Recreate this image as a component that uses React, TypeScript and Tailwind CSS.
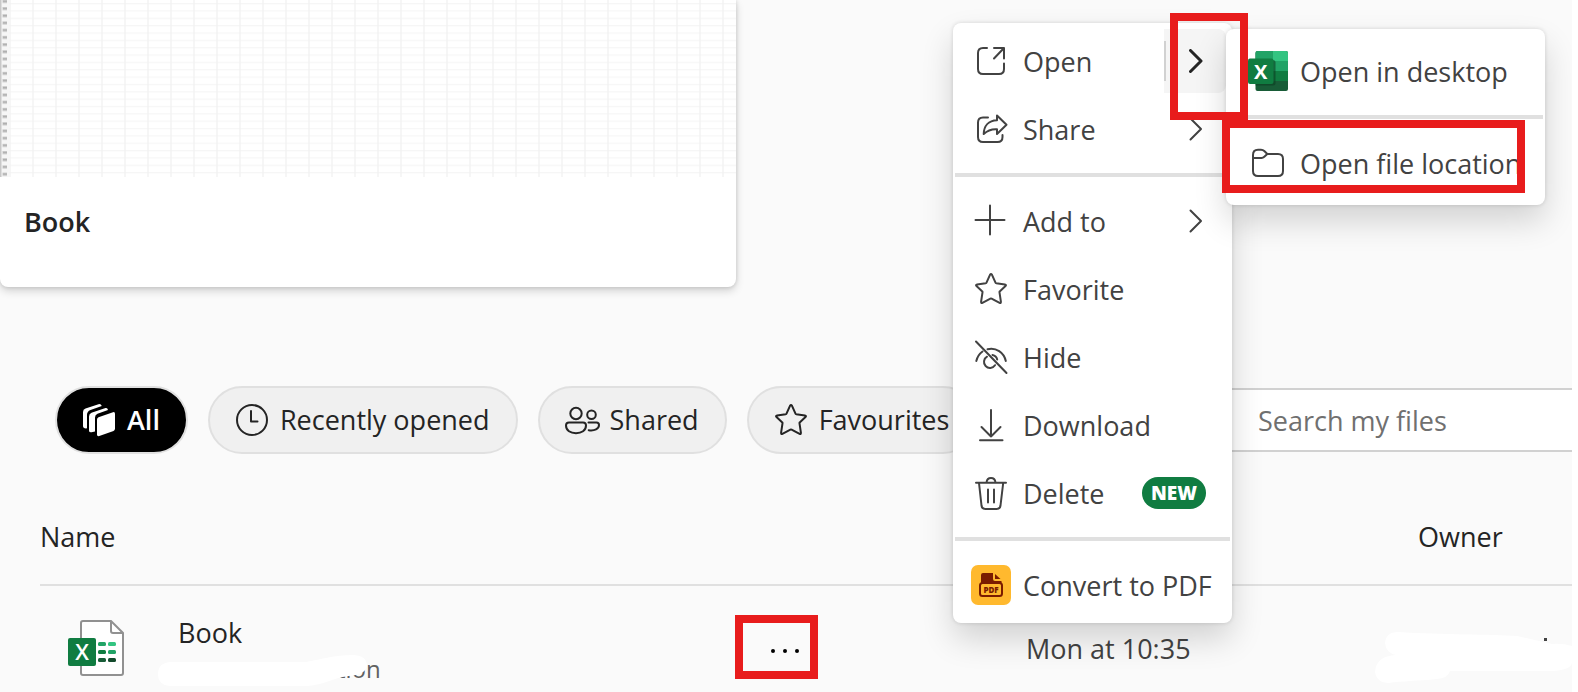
import React from "react";

const stroke = {
    fill: "none",
    stroke: "currentColor",
    strokeWidth: 2,
    strokeLinecap: "round" as const,
    strokeLinejoin: "round" as const,
};

function Icon({ children }: { children: React.ReactNode }) {
    return (
        <svg viewBox="0 0 32 32" className="h-8 w-8 shrink-0 overflow-visible" {...stroke} aria-hidden="true">
            {children}
        </svg>
    );
}

const StarIcon = () => (
    <Icon>
        <path d="M15.1 1.6Q16 .4 16.9 1.6L20.5 9.7Q20.7 10.2 21.3 10.3L29.9 11.5Q31.7 11.8 30.5 13L24.7 18.4Q24.4 18.8 24.5 19.4L25.9 28.6Q26 30.6 24.6 29.8L16.6 25.6Q16 25.3 15.4 25.6L7.4 29.8Q6 30.6 6.1 28.6L7.5 19.4Q7.6 18.8 7.3 18.4L1.5 13Q.3 11.8 2.1 11.5L10.7 10.3Q11.3 10.2 11.5 9.7Z" />
    </Icon>
);

const ClockIcon = () => (
    <Icon>
        <circle cx="16" cy="16" r="15" />
        <path d="M15 7V17.5H21.5" />
    </Icon>
);

const PeopleIcon = () => (
    <Icon>
        <circle cx="10" cy="9.5" r="5.7" />
        <circle cx="25.5" cy="10.8" r="4.3" />
        <path d="M3 18.5H17Q20 18.5 20 21.5C20 26.5 15.5 29.2 10 29.2S0 26.5 0 21.5Q0 18.5 3 18.5Z" />
        <path d="M22.5 18.5H30.500Q33 18.500 33 21C33 25 28.500 27 22.700 26.200" />
    </Icon>
);

const LayersIcon = () => (
    <Icon>
        <g fill="currentColor" stroke="none">
            <path d="M14 15.5Q14 14 15.5 13.3L30 8.2Q32 7.7 32 9.7V24.5Q32 26.3 30.5 27L16.3 32Q14 32.6 14 30.5Z" />
            <path d="M6 12.5Q6 9.7 8.5 8.8L22.5 4Q24.5 3.5 25 5.9L14.5 9.7Q12 10.9 12 13.5V27.5L8.5 28.3Q6 28.6 6 26.5Z" />
            <path d="M0 8Q0 5.4 2.5 4.5L15.5.2Q17.8-.4 18.8 2L7.5 6Q4 7.5 4 10.8V24.3Q0 24.8 0 22Z" />
        </g>
    </Icon>
);

const OpenIcon = () => (
    <Icon>
        <path d="M12 3H8Q3 3 3 8V24Q3 29 8 29H24Q29 29 29 24V18.5" />
        <path d="M19 3H29V13.5M29 3L19 13.5" />
    </Icon>
);

const ShareIcon = () => (
    <Icon>
        <path d="M13 4.5H8Q3 4.5 3 9.5V24Q3 29 8 29H22.5Q27.5 29 27.5 24V22" />
        <path d="M22 2.5L31.5 11.8L22 21V16.2C16 15.8 12.3 17.5 8.7 21C9 13 13.5 7.5 22 7.3Z" />
    </Icon>
);

const PlusIcon = () => (
    <Icon>
        <path d="M15 .5V29.5M.5 15H29.5" />
    </Icon>
);

const HideIcon = () => (
    <Icon>
        <path d="M1 .5L31.5 32" />
        <path d="M1.3 20Q2.7 14 7.5 10.5M12.5 8.2C21 6 29 11.5 30.8 20" />
        <path d="M12 15.7A6 6 0 1 0 20 24.2M17.5 14Q21.3 14.7 22.2 18.5" />
    </Icon>
);

const DownloadIcon = () => (
    <Icon>
        <path d="M16 1V27.5M6.5 18L16 27.5L25.5 18M5 31.3H27.5" />
    </Icon>
);

const DeleteIcon = () => (
    <Icon>
        <path d="M1 5.7H31M11.5 5.5Q12 1 16 1T20.5 5.5M4 6L6.5 28.5Q7 32 10.5 32H21.5Q25 32 25.5 28.5L28.2 6M13 12.5V25.5M19 12.5V25.5" />
    </Icon>
);

const FolderIcon = () => (
    <Icon>
        <path d="M1 8Q1 2.7 6 2.7H9Q11 2.7 12.3 4L15.3 7H26Q31 7 31 12V24Q31 29 26 29H6Q1 29 1 24ZM1 11H9.5Q11 11 12.3 9.8L15.3 7" />
    </Icon>
);

const Chevron = ({ bold = false }: { bold?: boolean }) => (
    <svg viewBox="0 0 14 24" className={bold ? "h-6 w-3.5 text-[#242424]" : "h-6 w-3.5"} {...stroke} strokeWidth={bold ? 3 : 2} aria-hidden="true">
        <path d="M1.5 1.5L12 12L1.5 22.5" />
    </svg>
);

function ExcelIcon() {
    return (
        <svg viewBox="0 0 40 40" className="h-10 w-10 shrink-0" aria-hidden="true">
            <rect x="7.5" width="32.5" height="40" rx="2" fill="#185c37" />
            <path d="M9.5 0H25V10H7.5V2Q7.5 0 9.5 0Z" fill="#21a366" />
            <path d="M25 0H38Q40 0 40 2V10H25Z" fill="#33c481" />
            <path d="M7.5 10H25V20H7.5Z" fill="#107c41" />
            <path d="M25 10H40V20H25Z" fill="#21a366" />
            <path d="M25 20H40V30H25Z" fill="#107c41" />
            <path d="M7.5 9H25Q27.5 9 27.5 11.5V32Q27.5 34.5 25 34.5H7.5Z" fill="#0b3d22" opacity=".6" />
            <rect y="7.5" width="25.5" height="25.5" rx="2" fill="#107c41" />
            <text x="12.7" y="27.5" textAnchor="middle" fontSize="20" fontWeight="700" fill="#fff">X</text>
        </svg>
    );
}

function ExcelFileIcon() {
    return (
        <svg viewBox="0 0 56 56" className="h-14 w-14" aria-hidden="true">
            <path d="M15 1H43L55 13V53Q55 55 53 55H15Q13 55 13 53V3Q13 1 15 1Z" fill="#fff" stroke="#919191" strokeWidth="2" />
            <path d="M43 1V11Q43 13 45 13H55" fill="none" stroke="#919191" strokeWidth="2" />
            <rect y="18" width="28" height="28" rx="2" fill="#107c41" />
            <text x="14" y="40" textAnchor="middle" fontSize="22" fontWeight="600" fill="#fff">X</text>
            <rect x="30" y="22" width="8" height="4" rx="1.5" fill="#21a366" />
            <rect x="40" y="22" width="8" height="4" rx="1.5" fill="#33c481" />
            <rect x="30" y="30" width="8" height="4" rx="1.5" fill="#107c41" />
            <rect x="40" y="30" width="8" height="4" rx="1.5" fill="#21a366" />
            <rect x="30" y="38" width="8" height="4" rx="1.5" fill="#185c37" />
            <rect x="40" y="38" width="8" height="4" rx="1.5" fill="#134a2c" />
        </svg>
    );
}

function PdfIcon() {
    return (
        <svg viewBox="0 0 40 40" className="h-10 w-10 shrink-0" aria-hidden="true">
            <rect width="40" height="40" rx="7" fill="#ffb92e" />
            <path d="M12 8H22V14Q22 16 24 16H30.5V18H10V10Q10 8 12 8Z" fill="#7a1c00" />
            <path d="M24 9L29.5 14H24Z" fill="#7a1c00" />
            <rect x="9" y="18" width="22" height="13" rx="2.5" fill="#ffb92e" stroke="#7a1c00" strokeWidth="2" />
            <text x="20" y="27.5" textAnchor="middle" fontSize="8" fontWeight="800" fill="#7a1c00">PDF</text>
        </svg>
    );
}

// miniature of the sheet: row numbers on the left, empty cells on the right
function SheetPreview() {
    return (
        <svg className="block h-[177px] w-full" aria-hidden="true">
            <defs>
                <pattern id="cells" x="9" y="3" width="23" height="7.35" patternUnits="userSpaceOnUse">
                    <path d="M0 .5H23" stroke="#f6f6f6" strokeWidth="1.5" />
                    <path d="M1 0V8" stroke="#f3f3f3" strokeWidth="1.5" />
                </pattern>
                <pattern id="rows" x="0" y="-2" width="9" height="7.2" patternUnits="userSpaceOnUse">
                    <path d="M2.5 1.8H7V5H2.5Z" fill="#c9c9c9" />
                    <path d="M3 3.4H7" stroke="#a8a8a8" />
                </pattern>
            </defs>
            <rect width="100%" height="100%" fill="#fff" />
            <rect x="9" width="100%" height="100%" fill="url(#cells)" />
            <rect width="9" height="100%" fill="#f6f6f6" />
            <rect width="9" height="100%" fill="url(#rows)" />
            <rect width="1.5" height="100%" fill="#c8c8c8" />
        </svg>
    );
}

const filters = [
    { label: "Recently opened", icon: <ClockIcon /> },
    { label: "Shared", icon: <PeopleIcon /> },
    { label: "Favourites", icon: <StarIcon /> },
];

const Separator = () => <div className="-mx-1 my-2 h-1 bg-[#e0e0e0]" />;

function MenuItem({ icon, label, children }: { icon: React.ReactNode; label: string; children?: React.ReactNode }) {
    return (
        <button role="menuitem" className="flex h-16 w-full items-center gap-3 pl-3 text-left whitespace-nowrap">
            <span className="flex w-10 shrink-0 justify-center">{icon}</span>
            <span className="flex-1 pt-0.5">{label}</span>
            {children}
        </button>
    );
}

function FileMenu() {
    return (
        <div role="menu" className="absolute top-[23px] right-[340px] flex w-[279px] flex-col gap-1 rounded-lg bg-white p-1.5 text-[#424242] shadow-[0_0_4px_rgba(0,0,0,0.14),0_16px_32px_rgba(0,0,0,0.16)]">
            <div className="flex">
                <MenuItem icon={<OpenIcon />} label="Open" />
                <button aria-label="More open options" className="flex h-16 w-[62px] shrink-0 items-center rounded-r-lg bg-[#f5f5f5]">
                    <span className="h-10 w-0.5 bg-[#d1d1d1]" />
                    <span className="pl-[23px]"><Chevron bold /></span>
                </button>
            </div>
            <MenuItem icon={<ShareIcon />} label="Share">
                <span className="pr-[23px]"><Chevron /></span>
            </MenuItem>
            <Separator />
            <MenuItem icon={<PlusIcon />} label="Add to">
                <span className="pr-[23px]"><Chevron /></span>
            </MenuItem>
            <MenuItem icon={<StarIcon />} label="Favorite" />
            <MenuItem icon={<HideIcon />} label="Hide" />
            <MenuItem icon={<DownloadIcon />} label="Download" />
            <MenuItem icon={<DeleteIcon />} label="Delete">
                <span className="mr-5 flex h-8 w-16 items-center justify-center rounded-full bg-[#107c41] text-[19px] font-extrabold text-white">NEW</span>
            </MenuItem>
            <Separator />
            <MenuItem icon={<PdfIcon />} label="Convert to PDF" />
        </div>
    );
}

function OpenSubmenu() {
    return (
        <div role="menu" className="absolute top-[29px] right-[27px] flex w-[319px] flex-col gap-1 rounded-lg bg-white px-1.5 py-2.5 text-[#424242] shadow-[0_0_4px_rgba(0,0,0,0.14),0_16px_32px_rgba(0,0,0,0.16)]">
            <div className="pl-1"><MenuItem icon={<ExcelIcon />} label="Open in desktop" /></div>
            <Separator />
            <div className="pl-1"><MenuItem icon={<FolderIcon />} label="Open file location" /></div>
        </div>
    );
}

export default function App() {
    return (
        <div className="relative mr-1.5 min-h-screen overflow-hidden bg-[#fafafa] font-['Open_Sans','Noto_Sans',sans-serif] text-[27px] leading-9 text-[#242424]">
            <section className="w-[736px] overflow-hidden rounded-b-lg bg-white shadow-[0_0_4px_rgba(0,0,0,0.14),0_4px_8px_rgba(0,0,0,0.16)]">
                <SheetPreview />
                <h2 className="h-[110px] px-6 pt-[27px] font-semibold">Book</h2>
            </section>

            <div className="mt-[99px] flex items-center gap-5 pl-[55px]">
                <button className="flex h-[68px] shrink-0 items-center gap-3 rounded-full border-2 border-[#e0e0e0] bg-black px-[26px] font-semibold text-white">
                    <LayersIcon />
                    All
                </button>
                {filters.map((f) => (
                    <button key={f.label} className="flex h-[68px] shrink-0 items-center gap-3 rounded-full border-2 border-[#e0e0e0] bg-[#f0f0f0] px-[26px] whitespace-nowrap">
                        {f.icon}
                        {f.label}
                    </button>
                ))}
                <input
                    type="search"
                    aria-label="Search my files"
                    placeholder="Search my files"
                    className="ml-auto h-16 w-[364px] shrink-0 rounded-l-lg border-2 border-r-0 border-[#d1d1d1] bg-white pl-12 placeholder:text-[#707070]"
                />
            </div>

            <div className="pt-8 pl-10">
                <table className="w-full table-fixed border-collapse text-left">
                    <colgroup>
                        <col className="w-[138px]" />
                        <col />
                        <col className="w-[291px]" />
                        <col className="w-[392px]" />
                        <col className="w-[154px]" />
                    </colgroup>
                    <thead>
                        <tr className="h-[99px] border-b-2 border-[#e0e0e0]">
                            <th colSpan={2} className="pt-1 font-normal">Name</th>
                            <th></th>
                            <th></th>
                            <th className="pt-1 font-normal">Owner</th>
                        </tr>
                    </thead>
                    <tbody>
                        <tr className="h-[104px]">
                            <td className="pt-5 pl-7"><ExcelFileIcon /></td>
                            <td className="relative pt-[26px]">
                                <a href="#book" className="block">Book</a>
                                <p className="pl-[159px] text-2xl leading-9 text-[#616161]">tion</p>
                                <svg viewBox="0 0 212 42" className="absolute bottom-0 -left-5 h-[42px] w-[212px]" aria-hidden="true">
                                    <path d="M12 15H148C165 12 175 8 196 8Q209 9 209 19Q207 28 190 29C175 31 165 38 150 39H12Q0 38 0 27T12 15Z" fill="#fff" />
                                </svg>
                            </td>
                            <td className="pt-[18px]">
                                <button aria-label="More options" className="flex h-16 w-[83px] items-center justify-center border-8 border-[#e81c1c] pt-2 pl-4">
                                    <svg viewBox="0 0 30 6" className="h-1.5 w-[30px]" aria-hidden="true">
                                        <circle cx="3" cy="3" r="2" />
                                        <circle cx="15" cy="3" r="2" />
                                        <circle cx="27" cy="3" r="2" />
                                    </svg>
                                </button>
                            </td>
                            <td className="pt-[22px] text-[#424242]">Mon at 10:35</td>
                            <td></td>
                        </tr>
                    </tbody>
                </table>
            </div>

            {/* owner name is scribbled out */}
            <svg viewBox="0 0 200 60" className="absolute right-0 bottom-0 h-[60px] w-[200px]" aria-hidden="true">
                <rect x="172" y="6" width="3" height="3" fill="#424242" />
                <path d="M26 0Q14 0 13 11Q14 21 24 23Q4 24 3 40Q5 51 17 51C30 49 45 49 65 47Q76 46 78 39L180 39Q200 38 200 30V14Q190 11 180 12L145 4C120 2 70 3 26 0Z" fill="#fff" />
            </svg>

            <FileMenu />
            <OpenSubmenu />

            <div className="pointer-events-none absolute top-[13px] right-[324px] h-[107px] w-[78px] border-8 border-[#e81c1c]" />
            <div className="pointer-events-none absolute top-[120px] right-[47px] h-[73px] w-[303px] border-8 border-[#e81c1c]" />
        </div>
    );
}
